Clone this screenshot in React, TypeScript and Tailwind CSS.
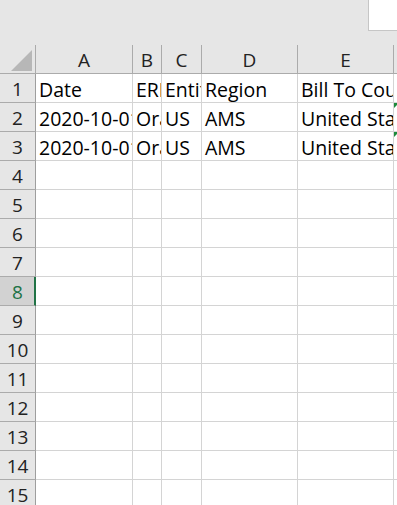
import React from "react";

const cols = [
  { label: "A", w: "w-[97px]" },
  { label: "B", w: "w-[29px]" },
  { label: "C", w: "w-[40px]" },
  { label: "D", w: "w-[96px]" },
  { label: "E", w: "w-[96px]" },
];

const data: string[][] = [
  ["Date", "ERP Source", "Entity", "Region", "Bill To Country", "Ship"],
  ["2020-10-01", "Oracle", "US", "AMS", "United States", "1"],
  ["2020-10-01", "Oracle", "US", "AMS", "United States", "1"],
];

export default function App() {
  const rows = Array.from({ length: 15 }, (_, i) => i + 1);
  return (
    <div
      className="w-[397px] h-[505px] overflow-hidden bg-[#e6e6e6] text-black"
      style={{ fontFamily: '"Open Sans", "Noto Sans", sans-serif' }}
    >
      <div className="h-[45px] flex justify-end items-start">
        <div className="w-[29px] h-[31px] bg-white border-l border-b border-[#c6c6c6]" />
      </div>
      {/* header row */}
      <div className="flex h-[29px]">
        <div className="w-[36px] shrink-0 h-full border-r border-b border-[#ababab] bg-[#e6e6e6] flex items-end justify-end pr-[3px] pb-[2px]">
          <div className="w-0 h-0 border-l-[21px] border-l-transparent border-b-[21px] border-b-[#b7b7b7]" />
        </div>
        {cols.map((c) => (
          <div
            key={c.label}
            className={`${c.w} shrink-0 h-full border-r border-b border-[#ababab] bg-[#e6e6e6] flex items-center justify-center pt-[2px] text-[19px] leading-none text-[#222]`}
          >
            {c.label}
          </div>
        ))}
        <div className="flex-1 h-full border-b border-[#ababab] bg-[#e6e6e6]" />
      </div>
      {rows.map((r) => {
        const sel = r === 8;
        const rowData = data[r - 1];
        return (
          <div key={r} className="flex h-[29px]">
            <div
              className={
                sel
                  ? "w-[36px] shrink-0 h-full border-r-2 border-r-[#217346] border-b border-b-[#ababab] bg-[#d2d2d2] flex items-center justify-center pt-[3px] text-[19px] leading-none text-[#217346] pl-[1px]"
                  : "w-[36px] shrink-0 h-full border-r border-r-[#9e9e9e] border-b border-b-[#ababab] bg-[#e6e6e6] flex items-center justify-center pt-[3px] text-[19px] leading-none text-[#222]"
              }
            >
              {r}
            </div>
            {cols.map((c, ci) => (
              <div
                key={c.label}
                className={`${c.w} shrink-0 h-full border-r border-b border-[#d4d4d4] bg-white overflow-hidden whitespace-nowrap pl-[3px] pt-[3px] flex items-center text-[19.5px] leading-none`}
              >
                {rowData ? rowData[ci] : ""}
              </div>
            ))}
            <div className="relative flex-1 h-full border-b border-[#d4d4d4] bg-white overflow-hidden">
              {(r === 2 || r === 3) && (
                <div className="absolute left-0 top-0 w-0 h-0 border-t-[5px] border-t-[#1e8a3c] border-r-[5px] border-r-transparent" />
              )}
            </div>
          </div>
        );
      })}
    </div>
  );
}
